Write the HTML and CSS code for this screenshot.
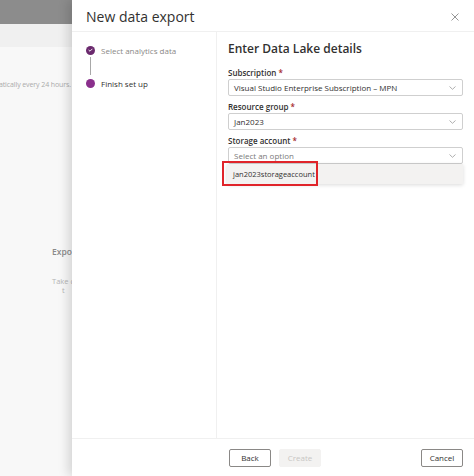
FILE: index.html
```html
<!DOCTYPE html>
<html>
<head>
<meta charset="utf-8">
<link rel="stylesheet" href="styles.css">
</head>
<body>
<div class="page">
  <div class="page-header"></div>
  <div class="page-band"></div>
  <div class="page-body">
    <div class="page-note"><span>Data will be exported automatically every 24 hours.</span></div>
    <div class="page-empty">
      <div class="empty-title">Export</div>
      <div class="empty-text">Take c</div>
      <div class="empty-text2">t</div>
    </div>
  </div>
</div>

<div class="panel">
  <div class="panel-head">
    <div class="panel-title">New data export</div>
    <svg class="close" width="8" height="8" viewBox="0 0 8 8"><path d="M0.5 0.5 L7.5 7.5 M7.5 0.5 L0.5 7.5" stroke="#8a8a8a" stroke-width="0.9" fill="none"/></svg>
  </div>
  <div class="panel-main">
    <div class="steps">
      <div class="step">
        <span class="dot done"><svg width="5" height="4" viewBox="0 0 5 4"><path d="M0.6 2 L2 3.2 L4.4 0.8" stroke="#fff" stroke-width="0.9" fill="none"/></svg></span>
        <span class="step-label">Select analytics data</span>
      </div>
      <div class="step-line"></div>
      <div class="step">
        <span class="dot current"></span>
        <span class="step-label active">Finish set up</span>
      </div>
    </div>
    <div class="form">
      <div class="form-title">Enter Data Lake details</div>
      <div class="field">
        <div class="label">Subscription <span class="req">*</span></div>
        <div class="select"><span>Visual Studio Enterprise Subscription – MPN</span><svg class="chev" width="7" height="4" viewBox="0 0 7 4"><path d="M0.5 0.5 L3.5 3.3 L6.5 0.5" stroke="#9a9a9a" stroke-width="0.8" fill="none"/></svg></div>
      </div>
      <div class="field">
        <div class="label">Resource group <span class="req">*</span></div>
        <div class="select"><span>Jan2023</span><svg class="chev" width="7" height="4" viewBox="0 0 7 4"><path d="M0.5 0.5 L3.5 3.3 L6.5 0.5" stroke="#9a9a9a" stroke-width="0.8" fill="none"/></svg></div>
      </div>
      <div class="field">
        <div class="label">Storage account <span class="req">*</span></div>
        <div class="select-wrap">
          <div class="select placeholder"><span>Select an option</span><svg class="chev" width="7" height="4" viewBox="0 0 7 4"><path d="M0.5 0.5 L3.5 3.3 L6.5 0.5" stroke="#9a9a9a" stroke-width="0.8" fill="none"/></svg></div>
          <div class="menu">
            <div class="option">jan2023storageaccount</div>
          </div>
          <div class="highlight"></div>
        </div>
      </div>
    </div>
  </div>
  <div class="panel-foot">
    <div class="foot-left">
      <button class="btn">Back</button>
      <button class="btn disabled">Create</button>
    </div>
    <button class="btn">Cancel</button>
  </div>
</div>
</body>
</html>
```

FILE: styles.css
```css
* { box-sizing: border-box; }
html, body {
  margin: 0;
  padding: 0;
  width: 474px;
  height: 476px;
  overflow: hidden;
  font-family: "Open Sans", "Noto Sans", sans-serif;
}
body { position: relative; background: #f7f7f7; }

.page { width: 474px; height: 476px; display: flex; flex-direction: column; }
.page-header { height: 24px; background: #8c8c8c; }
.page-band { height: 23px; background: #f0f0f0; }
.page-body { flex: 1; background: #f8f8f8; }
.page-note {
  width: 71px;
  overflow: hidden;
  display: flex;
  justify-content: flex-end;
  white-space: nowrap;
  margin-top: 33px;
  font-size: 7px;
  letter-spacing: -0.1px;
  color: #ababab;
}
.page-empty { padding-left: 52px; margin-top: 157px; white-space: nowrap; }
.empty-title { font-size: 8.5px; color: #8a8a8a; font-weight: 600; }
.empty-text { font-size: 7.5px; color: #b4b4b4; margin-top: 19px; }
.empty-text2 { font-size: 7.5px; color: #b4b4b4; padding-left: 10px; margin-top: -1px; }

.panel {
  position: absolute;
  top: 0;
  left: 72px;
  right: 0;
  bottom: 0;
  background: #fff;
  box-shadow: -4px 0 10px rgba(0,0,0,0.14);
  display: flex;
  flex-direction: column;
}
.panel-head {
  height: 32px;
  border-bottom: 1px solid #f0f0f0;
  display: flex;
  align-items: center;
  justify-content: space-between;
  padding: 0 15px 0 14px;
}
.panel-title { font-size: 14px; color: #323130; margin-top: 1px; }
.close { margin-top: 2px; }

.panel-main { flex: 1; display: flex; }
.steps {
  width: 145px;
  border-right: 1px solid #f0f0f0;
  padding: 13px 0 0 14px;
}
.step { display: flex; align-items: center; height: 10px; }
.dot {
  width: 9px;
  height: 9px;
  border-radius: 50%;
  display: flex;
  align-items: center;
  justify-content: center;
}
.dot.done { background: #6b2a6e; }
.dot.current { background: #8a2f8c; }
.step-label { font-size: 8px; color: #8a8886; margin-left: 6px; }
.step-label.active { color: #323130; }
.step-line { width: 1px; height: 18px; background: #a8a8a8; margin: 2px 0 3px 4px; }

.form { flex: 1; padding: 8px 11px 0 11px; }
.form-title { font-size: 12px; font-weight: 600; color: #323130; margin-bottom: 10px; }
.field { margin-bottom: 5px; }
.label { font-size: 8px; font-weight: 600; color: #323130; line-height: 11px; margin-bottom: 1px; }
.req { color: #a4262c; }
.select {
  height: 17px;
  border: 1px solid #cfcfcf;
  border-radius: 2px;
  display: flex;
  align-items: center;
  justify-content: space-between;
  padding: 0 6px 0 5px;
  font-size: 8px;
  color: #323130;
}
.select.placeholder { color: #7a7a7a; }
.select-wrap { position: relative; }
.menu {
  position: absolute;
  top: 17px;
  left: -1px;
  right: 0;
  background: #f3f2f1;
  box-shadow: 0 1px 4px rgba(0,0,0,0.15);
  height: 20px;
  display: flex;
  align-items: center;
  padding-left: 6px;
}
.option { font-size: 7.5px; color: #323130; }
.highlight {
  position: absolute;
  top: 14px;
  left: -6px;
  width: 96px;
  height: 25px;
  border: 2px solid #e0242a;
}

.panel-foot {
  height: 38px;
  border-top: 1px solid #f0f0f0;
  display: flex;
  align-items: center;
  justify-content: space-between;
  padding: 0 11px 0 157px;
}
.foot-left { display: flex; gap: 8px; }
.btn {
  width: 42px;
  height: 18px;
  border: 1px solid #8a8886;
  border-radius: 2px;
  background: #fff;
  font-family: inherit;
  font-size: 8px;
  color: #323130;
  padding: 0;
}
.btn.disabled { background: #f3f2f1; border-color: #f3f2f1; color: #c8c6c4; }
```
